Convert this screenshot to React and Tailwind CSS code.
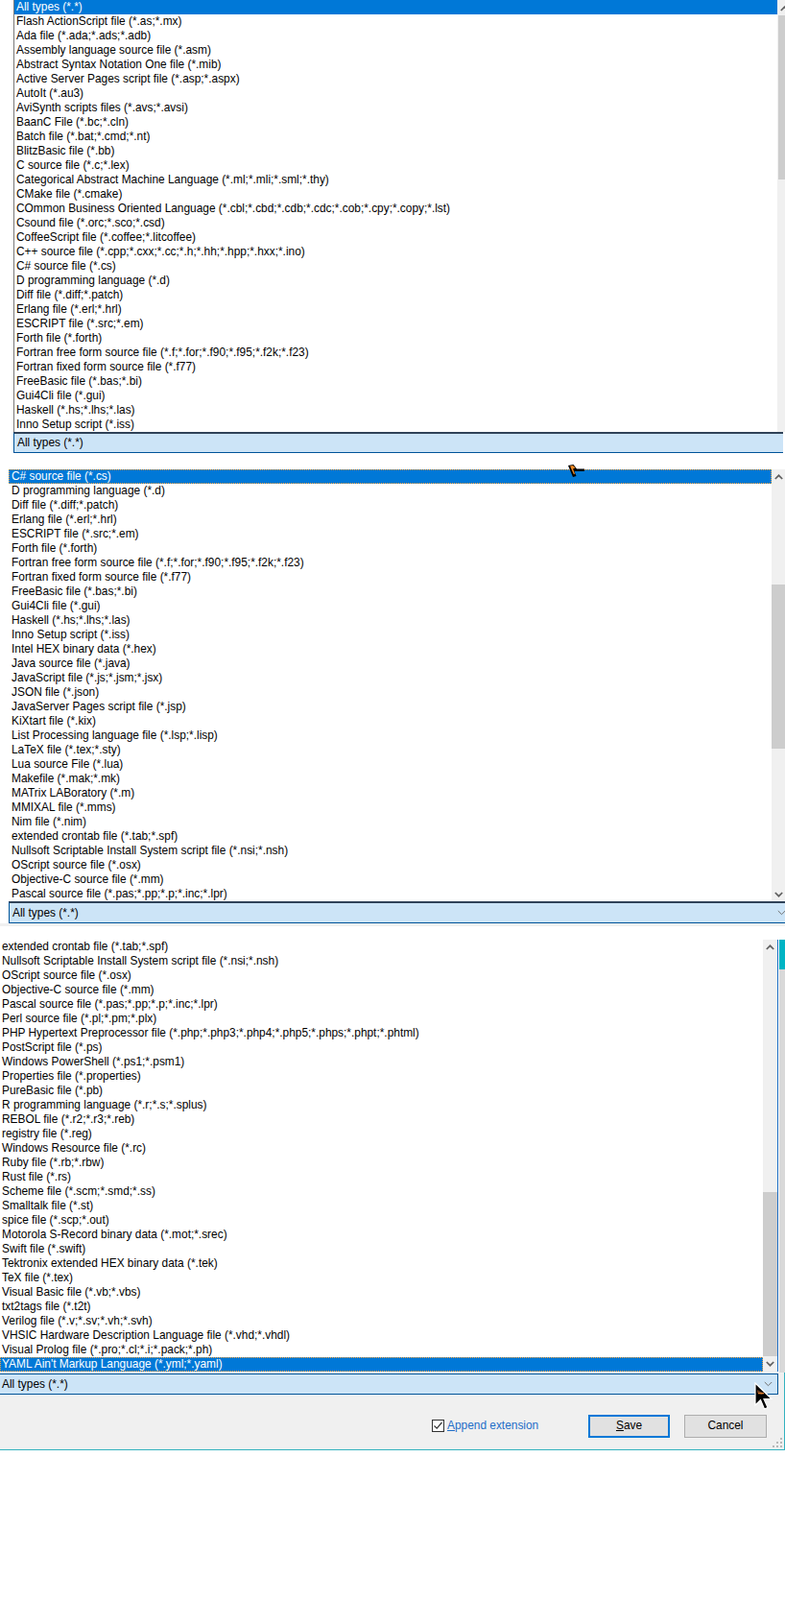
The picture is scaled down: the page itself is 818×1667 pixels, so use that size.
import React from 'react';

const FIRST = [
  'All types (*.*)',
  'Flash ActionScript file (*.as;*.mx)',
  'Ada file (*.ada;*.ads;*.adb)',
  'Assembly language source file (*.asm)',
  'Abstract Syntax Notation One file (*.mib)',
  'Active Server Pages script file (*.asp;*.aspx)',
  'AutoIt (*.au3)',
  'AviSynth scripts files (*.avs;*.avsi)',
  'BaanC File (*.bc;*.cln)',
  'Batch file (*.bat;*.cmd;*.nt)',
  'BlitzBasic file (*.bb)',
  'C source file (*.c;*.lex)',
  'Categorical Abstract Machine Language (*.ml;*.mli;*.sml;*.thy)',
  'CMake file (*.cmake)',
  'COmmon Business Oriented Language (*.cbl;*.cbd;*.cdb;*.cdc;*.cob;*.cpy;*.copy;*.lst)',
  'Csound file (*.orc;*.sco;*.csd)',
  'CoffeeScript file (*.coffee;*.litcoffee)',
  'C++ source file (*.cpp;*.cxx;*.cc;*.h;*.hh;*.hpp;*.hxx;*.ino)',
  'C# source file (*.cs)',
  'D programming language (*.d)',
  'Diff file (*.diff;*.patch)',
  'Erlang file (*.erl;*.hrl)',
  'ESCRIPT file (*.src;*.em)',
  'Forth file (*.forth)',
  'Fortran free form source file (*.f;*.for;*.f90;*.f95;*.f2k;*.f23)',
  'Fortran fixed form source file (*.f77)',
  'FreeBasic file (*.bas;*.bi)',
  'Gui4Cli file (*.gui)',
  'Haskell (*.hs;*.lhs;*.las)',
  'Inno Setup script (*.iss)',
];

const SECOND = [
  ...FIRST.slice(18),
  'Intel HEX binary data (*.hex)',
  'Java source file (*.java)',
  'JavaScript file (*.js;*.jsm;*.jsx)',
  'JSON file (*.json)',
  'JavaServer Pages script file (*.jsp)',
  'KiXtart file (*.kix)',
  'List Processing language file (*.lsp;*.lisp)',
  'LaTeX file (*.tex;*.sty)',
  'Lua source File (*.lua)',
  'Makefile (*.mak;*.mk)',
  'MATrix LABoratory (*.m)',
  'MMIXAL file (*.mms)',
  'Nim file (*.nim)',
  'extended crontab file (*.tab;*.spf)',
  'Nullsoft Scriptable Install System script file (*.nsi;*.nsh)',
  'OScript source file (*.osx)',
  'Objective-C source file (*.mm)',
  'Pascal source file (*.pas;*.pp;*.p;*.inc;*.lpr)',
];

const THIRD = [
  ...SECOND.slice(25),
  'Perl source file (*.pl;*.pm;*.plx)',
  'PHP Hypertext Preprocessor file (*.php;*.php3;*.php4;*.php5;*.phps;*.phpt;*.phtml)',
  'PostScript file (*.ps)',
  'Windows PowerShell (*.ps1;*.psm1)',
  'Properties file (*.properties)',
  'PureBasic file (*.pb)',
  'R programming language (*.r;*.s;*.splus)',
  'REBOL file (*.r2;*.r3;*.reb)',
  'registry file (*.reg)',
  'Windows Resource file (*.rc)',
  'Ruby file (*.rb;*.rbw)',
  'Rust file (*.rs)',
  'Scheme file (*.scm;*.smd;*.ss)',
  'Smalltalk file (*.st)',
  'spice file (*.scp;*.out)',
  'Motorola S-Record binary data (*.mot;*.srec)',
  'Swift file (*.swift)',
  'Tektronix extended HEX binary data (*.tek)',
  'TeX file (*.tex)',
  'Visual Basic file (*.vb;*.vbs)',
  'txt2tags file (*.t2t)',
  'Verilog file (*.v;*.sv;*.vh;*.svh)',
  'VHSIC Hardware Description Language file (*.vhd;*.vhdl)',
  'Visual Prolog file (*.pro;*.cl;*.i;*.pack;*.ph)',
  "YAML Ain't Markup Language (*.yml;*.yaml)",
];

const Chevron = ({ up = false, thin = false }) => (
  <svg width="9" height="6" viewBox="0 0 9 6" className="block">
    <polyline
      points={up ? '0.8,5 4.5,1.3 8.2,5' : '0.8,1 4.5,4.7 8.2,1'}
      fill="none"
      stroke={thin ? '#707070' : '#606060'}
      strokeWidth={thin ? 1 : 1.7}
    />
  </svg>
);

const Row = ({ label, active, focus, pad = 'pl-[2px]' }) => (
  <div
    className={`h-[15px] leading-[15px] whitespace-nowrap overflow-hidden ${pad} ${
      active ? 'bg-[#0078d7] text-white' : 'text-black'
    } ${focus ? 'outline-1 outline-dotted outline-[#f0a040] -outline-offset-1' : ''}`}
  >
    {label}
  </div>
);

const Combo = ({ className = '', chevron = true }) => (
  <div className={`flex items-center justify-between bg-[#cce4f7] overflow-hidden ${className}`}>
    <span className="leading-[15px]">All types (*.*)</span>
    {chevron ? (
      <span className="pr-[5px]">
        <Chevron thin />
      </span>
    ) : null}
  </div>
);

const Checkbox = () => (
  <span className="flex h-[13px] w-[13px] items-center justify-center border border-[#333333] bg-white">
    <svg width="11" height="11" viewBox="0 0 11 11">
      <polyline points="1.5,5.5 4.2,8.2 9.5,2" fill="none" stroke="#333333" strokeWidth="1.2" />
    </svg>
  </span>
);

const Cursor = () => (
  <svg width="21" height="30" viewBox="0 0 21 30" className="absolute left-[786px] top-[1440px]">
    <path d="M1 1 L1 24 L6.5 18.5 L10.5 28 L14 26.5 L10 17.5 L18 17.5 Z" fill="#000" stroke="#fff" strokeWidth="1.2" />
    <path d="M3 8 L9 11 L8 13 L3 11 Z" fill="#6b3a1c" />
    <rect x="4" y="11" width="6" height="1.3" fill="#e08030" />
  </svg>
);

const CursorFragment = () => (
  <svg width="20" height="15" viewBox="0 0 20 15" className="absolute left-[591px] top-[484px]">
    <path d="M1 1 L6 13 L9.5 12 L7.5 7 L18 7 L18 4.5 L10 4.5 L6.5 0 Z" fill="#000" />
    <path d="M3 1.5 L7 10.5 L8 9.5 L6 4.5 L8.5 3.5 L6 1 Z" fill="#f08a24" />
  </svg>
);

export default function App() {
  return (
    <div
      className="relative w-[818px] h-[1667px] bg-white text-[11.9px] overflow-hidden"
      style={{ fontFamily: '"Segoe UI", "Liberation Sans", Arial, sans-serif' }}
    >
      {/* first dropdown */}
      <div className="pl-[14px]">
        <div className="flex h-[450px] border-l border-[#7a7a7a]">
          <div className="w-[795px]">
            {FIRST.map((item, i) => (
              <Row key={item} label={item} active={i === 0} />
            ))}
          </div>
          <div className="relative flex-1 bg-[#f0f0f0] overflow-hidden">
            <div className="pl-[3px] pt-[6px]">
              <Chevron up />
            </div>
            <div className="mt-[4px] h-[171px] bg-[#cdcdcd] ml-px" />
          </div>
        </div>
        <Combo className="h-[22px] w-[802px] pl-[3px] border-t-2 border-t-[#2f4258] border-b border-l border-[#005499]" chevron={false} />
      </div>

      {/* second dropdown */}
      <div className="mt-[17px] pl-[9px]">
        <div className="flex h-[450px]">
          <div className="w-[795px]">
            {SECOND.map((item, i) => (
              <Row key={item} label={item} active={i === 0} focus={i === 0} pad="pl-[3px]" />
            ))}
          </div>
          <div className="flex flex-1 flex-col bg-[#f0f0f0]">
            <div className="flex h-[15px] items-center pl-[3px]">
              <Chevron up />
            </div>
            <div className="mt-[105px] h-[171px] bg-[#cdcdcd]" />
            <div className="flex-1" />
            <div className="flex h-[15px] items-center pl-[3px]">
              <Chevron />
            </div>
          </div>
        </div>
        <Combo className="h-[23px] pl-[3px] border-t-2 border-t-[#2f4258] border-b border-l border-[#005499] -mr-[6px]" />
      </div>
      <div className="h-[3px] bg-[#f0f0f0]" />
      <div className="h-[14px]" />

      {/* third dropdown inside dialog */}
      <div className="flex w-[818px] border-b border-[#33b2bf]">
        <div className="w-[811px] bg-[#f0f0f0]">
          <div className="flex h-[450px]">
            <div className="w-[795px] bg-white">
              {THIRD.map((item, i) => (
                <Row key={item} label={item} active={i === THIRD.length - 1} focus={i === THIRD.length - 1} />
              ))}
            </div>
            <div className="flex w-[15px] flex-col bg-[#f0f0f0]">
              <div className="flex h-[16px] items-center justify-center">
                <Chevron up />
              </div>
              <div className="flex-1" />
              <div className="h-[171px] bg-[#cdcdcd]" />
              <div className="flex h-[16px] items-center justify-center">
                <Chevron />
              </div>
            </div>
            <div className="w-px bg-[#1f6fc5]" />
          </div>
          <div className="h-[2px]" />
          <Combo className="h-[22px] pl-[2px] border border-[#005499] border-l-0" />
          <div className="relative flex h-[57px] items-start pt-[21px] pr-[12px]">
            <div className="ml-[450px] mt-[5px] flex items-center">
              <Checkbox />
              <span className="ml-[3px] leading-[13px] text-[#1e6ec8]">
                <span className="underline">A</span>ppend extension
              </span>
            </div>
            <div className="ml-auto flex gap-[15px]">
              <button type="button" className="flex h-[24px] w-[85px] items-center justify-center border-2 border-[#0078d7] bg-[#e1e1e1] text-black">
                <span className="underline">S</span>ave
              </button>
              <button type="button" className="flex h-[24px] w-[86px] items-center justify-center border border-[#adadad] bg-[#e1e1e1] text-black">
                Cancel
              </button>
            </div>
            <svg width="10" height="10" viewBox="0 0 10 10" className="absolute right-[-4px] bottom-[2px]">
              {[
                [8, 0], [8, 4], [4, 4], [8, 8], [4, 8], [0, 8],
              ].map(([x, y]) => (
                <rect key={`${x}-${y}`} x={x} y={y} width="2" height="2" fill="#b8b8b8" />
              ))}
            </svg>
          </div>
        </div>
        <div className="flex w-[7px] flex-col">
          <div className="h-[31px] bg-[#00b4c4] border-l border-white" />
          <div className="h-[420px] bg-[#d9d9d9] border-l border-white" />
          <div className="flex-1 bg-[#f0f0f0] border-r border-[#33b2bf]" />
        </div>
      </div>

      <CursorFragment />
      <Cursor />
    </div>
  );
}
